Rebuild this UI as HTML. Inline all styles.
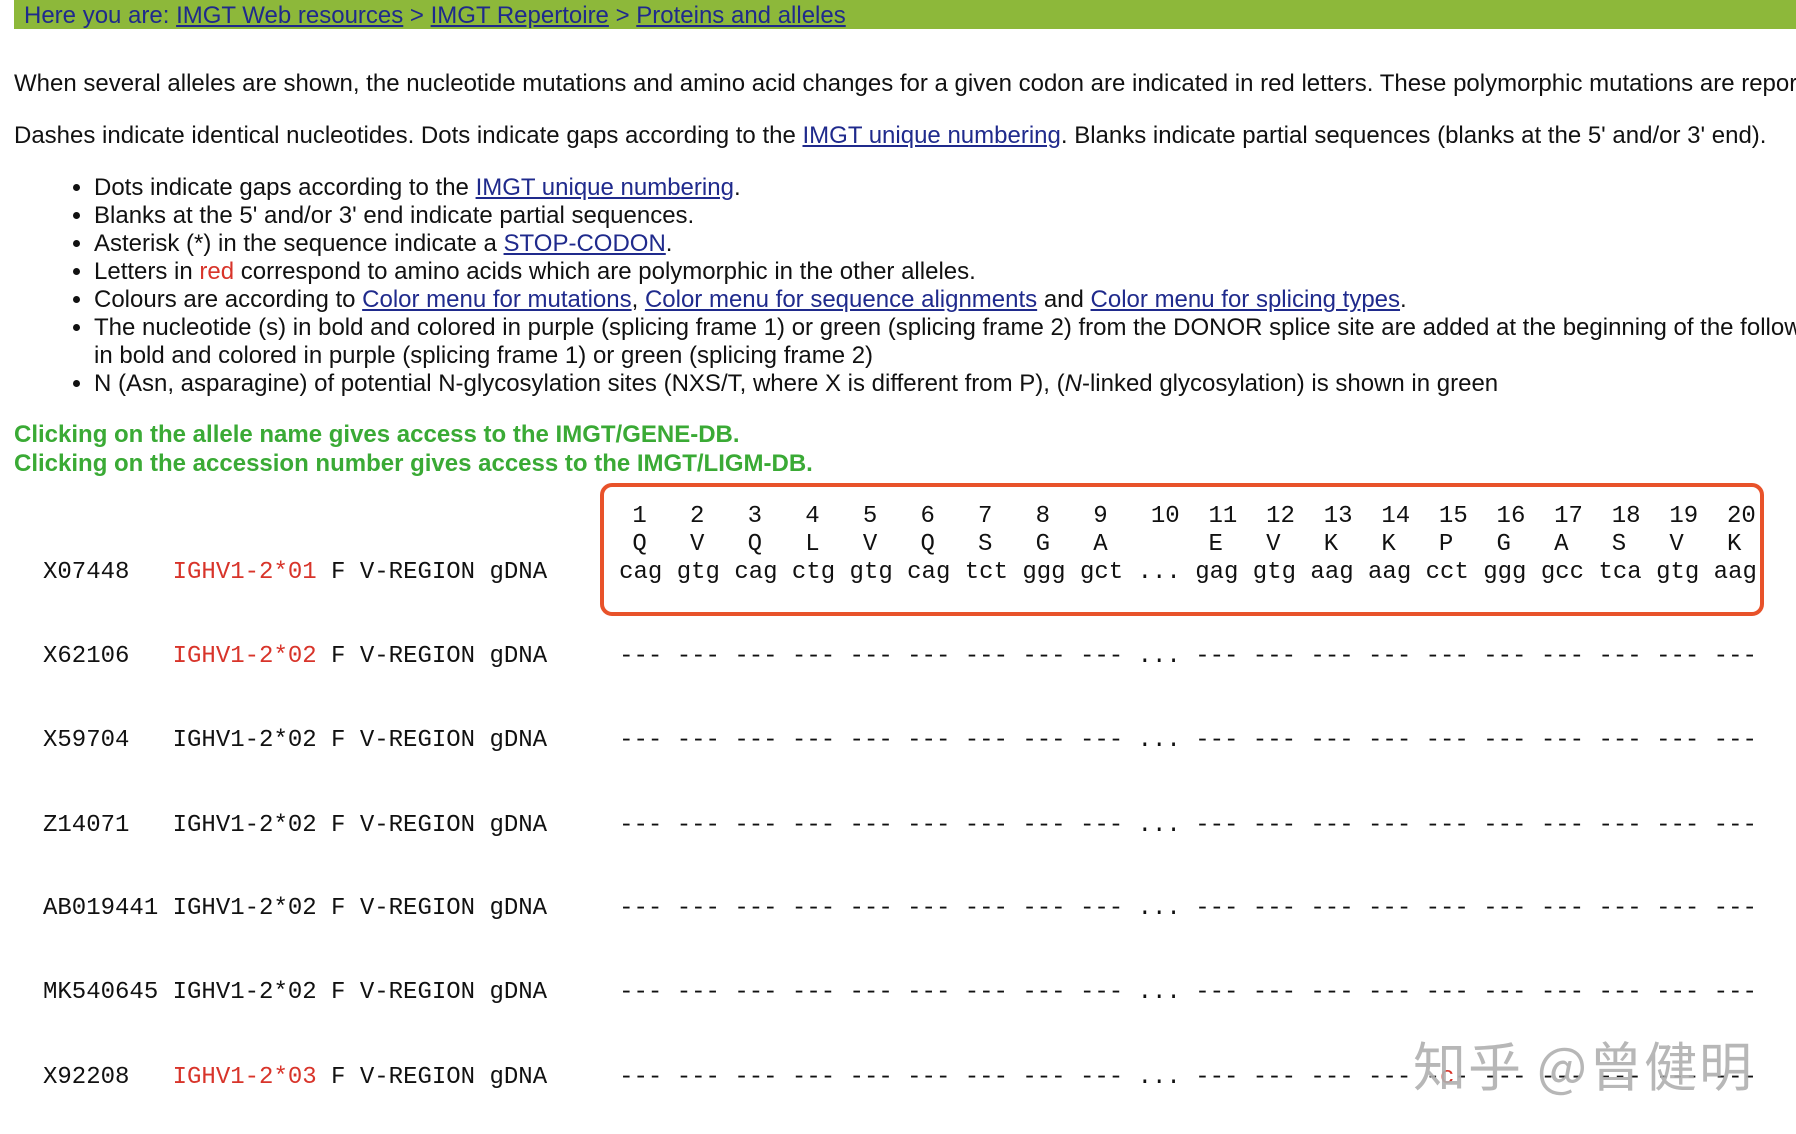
<!DOCTYPE html>
<html><head><meta charset="utf-8"><style>
body{margin:0;width:1796px;height:1134px;overflow:hidden;background:#fff;position:relative;font-family:"Liberation Sans",Arial,sans-serif;font-size:24px;color:#111}
a{color:#1f2a8c;text-decoration:underline}
.bar{position:absolute;left:14px;top:0;width:1782px;height:29px;background:#8db83a;color:#1f2a8c;line-height:31px;padding-left:10px;box-sizing:border-box;white-space:nowrap}
.t{position:absolute;left:14px;white-space:nowrap;line-height:28px}
ul{position:absolute;left:0;top:174px;margin:0;padding-left:94px;list-style:disc;line-height:28px;white-space:nowrap}
.g{color:#3aaa35;font-weight:bold}
pre{position:absolute;margin:0;font-family:"Liberation Mono","Courier New",monospace;font-weight:normal;font-size:24px;line-height:28px;color:#111}
.r{color:#d8342a}
.box{position:absolute;left:600px;top:483px;width:1164px;height:133px;border:4px solid #e8522a;border-radius:12px;box-sizing:border-box}
.wm{position:absolute;left:1413px;top:1026px;font-family:"Noto Sans CJK SC",sans-serif;font-size:53px;color:#b0b0b0;letter-spacing:2px;opacity:.9;white-space:nowrap}
</style></head><body>
<div class="bar">Here you are: <a>IMGT Web resources</a> &gt; <a>IMGT Repertoire</a> &gt; <a>Proteins and alleles</a></div>
<div class="t" style="top:70px">When several alleles are shown, the nucleotide mutations and amino acid changes for a given codon are indicated in red letters. These polymorphic mutations are reported</div>
<div class="t" style="top:122px">Dashes indicate identical nucleotides. Dots indicate gaps according to the <a>IMGT unique numbering</a>. Blanks indicate partial sequences (blanks at the 5' and/or 3' end).</div>
<ul>
<li>Dots indicate gaps according to the <a>IMGT unique numbering</a>.</li>
<li>Blanks at the 5' and/or 3' end indicate partial sequences.</li>
<li>Asterisk (*) in the sequence indicate a <a>STOP-CODON</a>.</li>
<li>Letters in <span style="color:#d8342a">red</span> correspond to amino acids which are polymorphic in the other alleles.</li>
<li>Colours are according to <a>Color menu for mutations</a>, <a>Color menu for sequence alignments</a> and <a>Color menu for splicing types</a>.</li>
<li>The nucleotide (s) in bold and colored in purple (splicing frame 1) or green (splicing frame 2) from the DONOR splice site are added at the beginning of the following<br>in bold and colored in purple (splicing frame 1) or green (splicing frame 2)</li>
<li>N (Asn, asparagine) of potential N-glycosylation sites (NXS/T, where X is different from P), (<i>N</i>-linked glycosylation) is shown in green</li>
</ul>
<div class="t g" style="top:421px">Clicking on the allele name gives access to the IMGT/GENE-DB.</div>
<div class="t g" style="top:450px">Clicking on the accession number gives access to the IMGT/LIGM-DB.</div>
<div class="box"></div>
<pre style="left:618px;top:503px"> 1   2   3   4   5   6   7   8   9   10  11  12  13  14  15  16  17  18  19  20
 Q   V   Q   L   V   Q   S   G   A       E   V   K   K   P   G   A   S   V   K</pre>
<pre style="left:43px;top:559px">X07448   <span class="r">IGHV1-2*01</span> F V-REGION gDNA     cag gtg cag ctg gtg cag tct ggg gct ... gag gtg aag aag cct ggg gcc tca gtg aag</pre>
<pre style="left:43px;top:643px">X62106   <span class="r">IGHV1-2*02</span> F V-REGION gDNA     --- --- --- --- --- --- --- --- --- ... --- --- --- --- --- --- --- --- --- ---</pre>
<pre style="left:43px;top:727px">X59704   IGHV1-2*02 F V-REGION gDNA     --- --- --- --- --- --- --- --- --- ... --- --- --- --- --- --- --- --- --- ---</pre>
<pre style="left:43px;top:812px">Z14071   IGHV1-2*02 F V-REGION gDNA     --- --- --- --- --- --- --- --- --- ... --- --- --- --- --- --- --- --- --- ---</pre>
<pre style="left:43px;top:895px">AB019441 IGHV1-2*02 F V-REGION gDNA     --- --- --- --- --- --- --- --- --- ... --- --- --- --- --- --- --- --- --- ---</pre>
<pre style="left:43px;top:979px">MK540645 IGHV1-2*02 F V-REGION gDNA     --- --- --- --- --- --- --- --- --- ... --- --- --- --- --- --- --- --- --- ---</pre>
<pre style="left:43px;top:1064px">X92208   <span class="r">IGHV1-2*03</span> F V-REGION gDNA     --- --- --- --- --- --- --- --- --- ... --- --- --- --- -<span class="r">c</span>- --- --- --- --- ---</pre>
<div class="wm">知乎 @曾健明</div>
</body></html>
